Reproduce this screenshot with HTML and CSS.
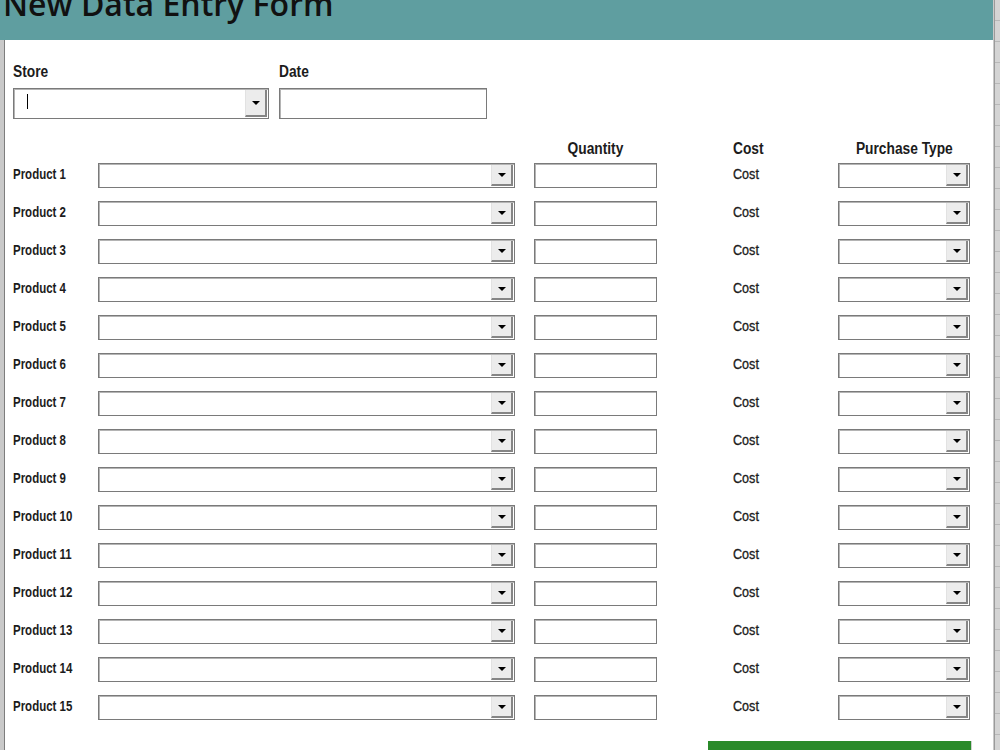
FILE: index.html
```html
<!DOCTYPE html>
<html>
<head>
<meta charset="utf-8">
<link rel="stylesheet" href="styles.css">
</head>
<body>
<div class="window">
  <div class="titlebar"><h1 class="title">New Data Entry Form</h1></div>
  <div class="panel">
    <div class="top">
      <div class="field">
        <div class="lbl"><span class="nar">Store</span></div>
        <div class="box combo store"><span class="caret"></span><span class="btn"><span class="tri"></span></span></div>
      </div>
      <div class="field">
        <div class="lbl"><span class="nar">Date</span></div>
        <div class="box date"></div>
      </div>
    </div>
    <div class="heads">
      <div></div><div></div>
      <div class="hdr c"><span class="nar mid">Quantity</span></div>
      <div class="hdr cost"><span class="nar">Cost</span></div>
      <div class="hdr c"><span class="nar mid">Purchase Type</span></div>
    </div>
    <div class="grid" id="grid"></div>
    <div class="footer"><div class="submit"></div></div>
  </div>
</div>
<div class="side"></div>
<script src="script.js"></script>
</body>
</html>
```
FILE: script.js
```js
var g = document.getElementById('grid');
for (var i = 1; i <= 15; i++) {
  var html = '<div class="plbl"><span class="pn">Product ' + i + '</span></div>' +
    '<div class="cell"><div class="box combo prod"><span class="btn"><span class="tri"></span></span></div></div>' +
    '<div class="cell"><div class="box qty"></div></div>' +
    '<div class="costv"><span class="cn">Cost</span></div>' +
    '<div class="cell"><div class="box combo ptype"><span class="btn"><span class="tri"></span></span></div></div>';
  g.insertAdjacentHTML('beforeend', html);
}
```
FILE: styles.css
```css
html, body {
  margin: 0;
  padding: 0;
}
body {
  width: 1000px;
  height: 750px;
  overflow: hidden;
  background: #c9c9c9;
  position: relative;
  font-family: "Liberation Sans", Arial, sans-serif;
  color: #1c1c1c;
}
.window {
  width: 993px;
  height: 750px;
  display: flex;
  flex-direction: column;
}
.titlebar {
  height: 40px;
  background: #5f9ea0;
  overflow: hidden;
  flex: none;
}
.title {
  margin: -12px 0 0 3px;
  font-family: "Open Sans", sans-serif;
  font-weight: 600;
  font-size: 32px;
  line-height: 32px;
  color: #111;
  white-space: nowrap;
}
.panel {
  flex: 1;
  margin-left: 4px;
  background: #fff;
  border-left: 1px solid #7d7d7d;
  padding: 23px 0 0 8px;
}
.top {
  display: flex;
  gap: 10px;
}
.nar {
  display: inline-block;
  transform: scaleX(0.86);
  transform-origin: left center;
  white-space: nowrap;
}
.nar.mid { transform-origin: center center; }
.lbl {
  font-weight: bold;
  font-size: 16px;
  line-height: 18px;
  margin-bottom: 7px;
}
.box {
  box-sizing: border-box;
  border: 1px solid #7a7a7a;
  box-shadow: inset 1px 1px 0 #b4b4b4;
  background: #fff;
  position: relative;
}
.store { width: 256px; height: 31px; }
.date { width: 208px; height: 31px; }
.caret {
  position: absolute;
  left: 13px;
  top: 5px;
  width: 1px;
  height: 15px;
  background: #000;
}
.btn {
  position: absolute;
  right: 1px;
  top: 1px;
  bottom: 1px;
  width: 19px;
  background: #ececec;
  border-right: 2px solid #858585;
  border-bottom: 2px solid #858585;
  border-left: 1px solid #e2e2e2;
  display: flex;
  align-items: center;
  justify-content: center;
}
.tri {
  width: 0;
  height: 0;
  border-left: 4px solid transparent;
  border-right: 4px solid transparent;
  border-top: 4px solid #000;
}
.heads, .grid {
  display: grid;
  grid-template-columns: 85px 436px 123px 181px 132px;
}
.heads {
  margin-top: 21px;
  height: 18px;
}
.hdr {
  font-weight: bold;
  font-size: 16px;
  line-height: 18px;
}
.grid {
  grid-auto-rows: 24px;
  row-gap: 14px;
  margin-top: 5px;
  align-items: center;
}
.c { text-align: center; }
.cost { padding-left: 76px; }
.plbl {
  font-weight: bold;
  font-size: 14px;
  line-height: 16px;
  margin-top: -3px;
}
.pn {
  display: inline-block;
  transform: scaleX(0.82);
  transform-origin: left center;
  white-space: nowrap;
}
.costv {
  padding-left: 76px;
  font-size: 14px;
  line-height: 16px;
  margin-top: -3px;
  -webkit-text-stroke: 0.3px #1c1c1c;
}
.cn {
  display: inline-block;
  transform: scaleX(0.9);
  transform-origin: left center;
}
.cell { height: 24px; }
.prod { width: 417px; height: 25px; }
.qty { width: 123px; height: 25px; }
.ptype { width: 132px; height: 25px; }
.footer {
  display: flex;
  padding-left: 695px;
  margin-top: 22px;
}
.submit {
  width: 263px;
  height: 20px;
  background: #2a8a2a;
  border-right: 1px solid #d0d0d0;
}
.side {
  position: absolute;
  left: 994px;
  top: 0;
  width: 6px;
  height: 750px;
  background: repeating-linear-gradient(to bottom, #d4d4d4 0, #d4d4d4 20px, #b8b8b8 20px, #b8b8b8 21px);
  border-left: 1px solid #9a9a9a;
}
```
